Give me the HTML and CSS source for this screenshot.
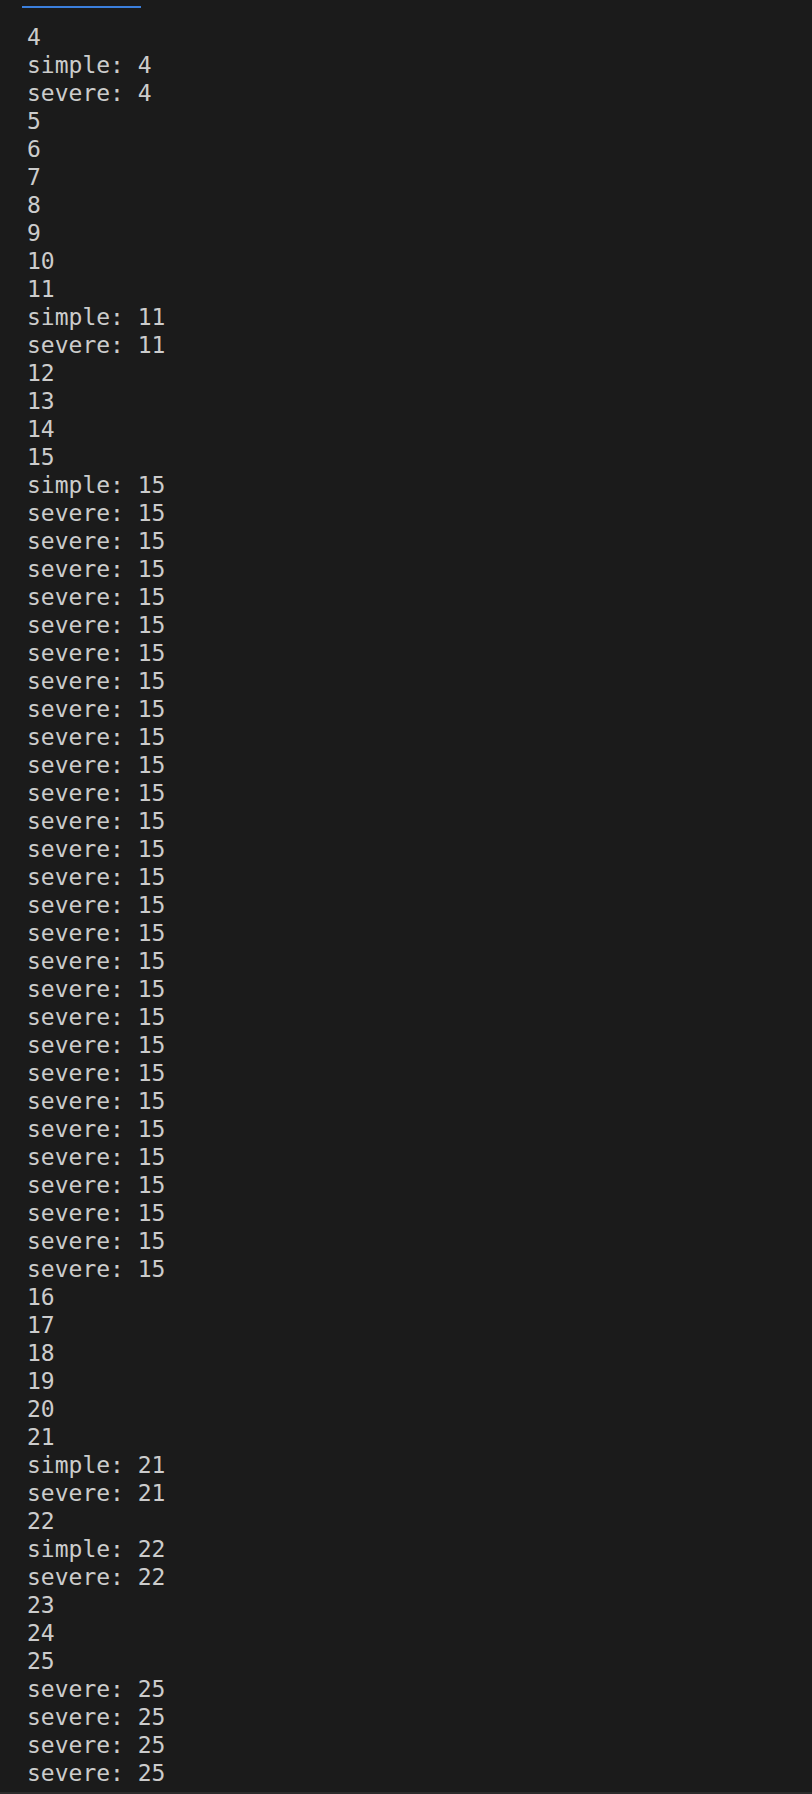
FILE: index.html
```html
<!DOCTYPE html>
<html>
<head>
<meta charset="utf-8">
<link rel="stylesheet" href="styles.css">
</head>
<body>
<div class="terminal">
  <div class="tab-indicator"></div>
  <pre class="output">4
simple: 4
severe: 4
5
6
7
8
9
10
11
simple: 11
severe: 11
12
13
14
15
simple: 15
severe: 15
severe: 15
severe: 15
severe: 15
severe: 15
severe: 15
severe: 15
severe: 15
severe: 15
severe: 15
severe: 15
severe: 15
severe: 15
severe: 15
severe: 15
severe: 15
severe: 15
severe: 15
severe: 15
severe: 15
severe: 15
severe: 15
severe: 15
severe: 15
severe: 15
severe: 15
severe: 15
severe: 15
16
17
18
19
20
21
simple: 21
severe: 21
22
simple: 22
severe: 22
23
24
25
severe: 25
severe: 25
severe: 25
severe: 25</pre>
  <div class="bottom-edge"></div>
</div>
</body>
</html>
```
FILE: styles.css
```css
html, body {
  margin: 0;
  padding: 0;
  background: #1b1b1b;
}
.terminal {
  width: 812px;
  height: 1794px;
  background: #1b1b1b;
  display: flex;
  flex-direction: column;
  overflow: hidden;
}
.tab-indicator {
  width: 119px;
  height: 2px;
  margin: 6px 0 0 22px;
  background: #3b7fdc;
  flex: none;
}
.output {
  margin: 15px 0 0 27px;
  font-family: "DejaVu Sans Mono", monospace;
  font-size: 23px;
  line-height: 28px;
  color: #cccccc;
  flex: 1;
}
.bottom-edge {
  height: 2px;
  background: #2b2b2b;
  flex: none;
}
```
